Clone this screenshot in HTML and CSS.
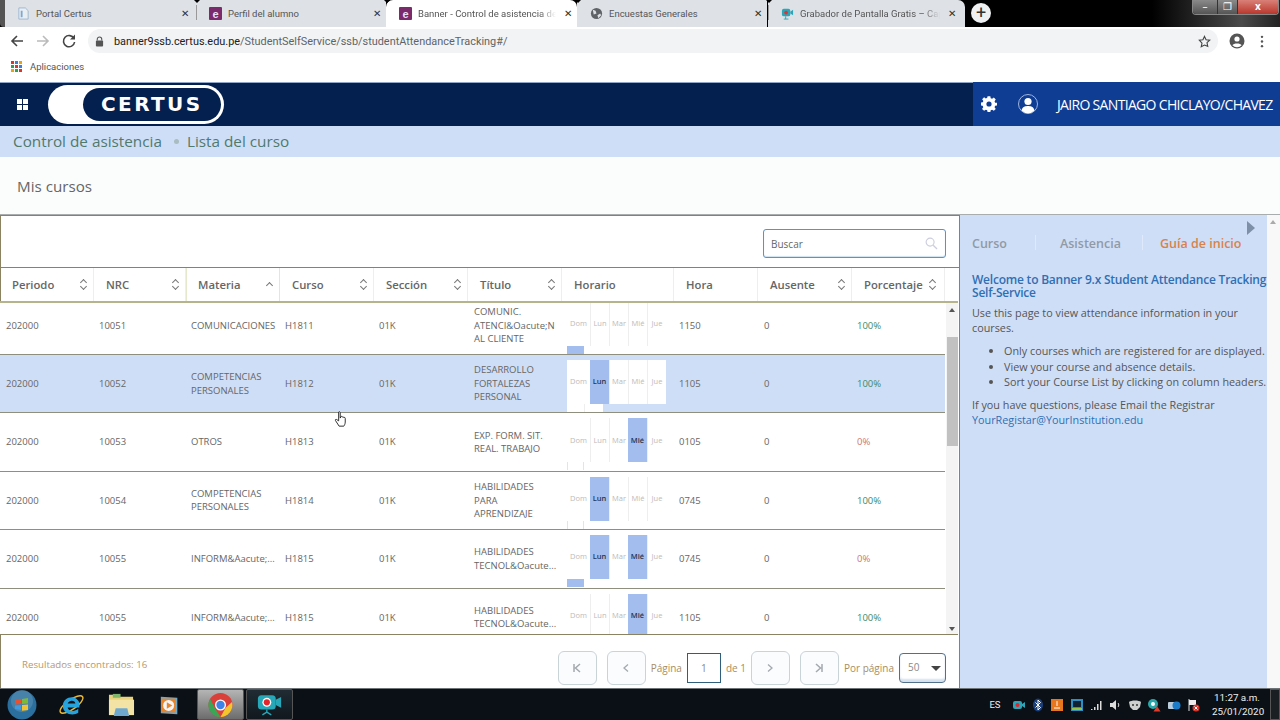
FILE: index.html
```html
<!DOCTYPE html>
<html lang="es">
<head>
<meta charset="utf-8">
<title>Banner - Control de asistencia</title>
<link rel="stylesheet" href="styles.css">
</head>
<body>
<div class="tabbar">
  <div class="tail"></div>
  <div class="tab t1">
    <svg class="fav" viewBox="0 0 14 14"><path d="M2 1h7l3 3v9H2z" fill="#e9eef3" stroke="#9db6cf"/><path d="M4 4h2v7H4z" fill="#7fa8d0"/></svg>
    <span class="tab-title">Portal Certus</span><span class="tab-x">✕</span>
  </div>
  <div class="tab sep notch">
    <svg class="fav" viewBox="0 0 14 14"><rect width="14" height="14" rx="1" fill="#7b2a6b"/><text x="7" y="11.5" text-anchor="middle" class="fav-e">e</text></svg>
    <span class="tab-title">Perfil del alumno</span><span class="tab-x">✕</span>
  </div>
  <div class="tab active notch">
    <svg class="fav" viewBox="0 0 14 14"><rect width="14" height="14" rx="1" fill="#7b2a6b"/><text x="7" y="11.5" text-anchor="middle" class="fav-e">e</text></svg>
    <span class="tab-title fade">Banner - Control de asistencia de</span><span class="tab-x">✕</span>
  </div>
  <div class="tab notch">
    <svg class="fav" viewBox="0 0 14 14"><circle cx="7" cy="7" r="6" fill="#5f6368"/><path d="M3 3l3 1 1 3-3 1zM8 9l3-2 1 2-3 3z" fill="#dee1e6"/></svg>
    <span class="tab-title">Encuestas Generales</span><span class="tab-x">✕</span>
  </div>
  <div class="tab sep notch last">
    <svg class="fav" viewBox="0 0 14 14"><rect x="1" y="2" width="9" height="8" rx="2" fill="#2aa6b8"/><circle cx="5.5" cy="6" r="2" fill="#e8312f"/><path d="M10 5l3-2v6l-3-2z" fill="#2aa6b8"/><path d="M5 10v3M3 13h5" stroke="#2aa6b8"/></svg>
    <span class="tab-title fade">Grabador de Pantalla Gratis – Cap</span><span class="tab-x">✕</span>
  </div>
  <div class="newtab">+</div>
  <div class="winctl">
    <span class="wbtn">–</span><span class="wbtn wmid">❐</span><span class="wbtn wclose">x</span>
  </div>
</div>

<div class="toolbar">
  <svg class="nav" viewBox="0 0 16 16"><path d="M14 8H3M8 3L3 8l5 5" fill="none" stroke="#444" stroke-width="1.6"/></svg>
  <svg class="nav" viewBox="0 0 16 16"><path d="M2 8h11M8 3l5 5-5 5" fill="none" stroke="#bbb" stroke-width="1.6"/></svg>
  <svg class="nav" viewBox="0 0 16 16"><path d="M13 5.5A5.6 5.6 0 1 0 13.6 9" fill="none" stroke="#444" stroke-width="1.6"/><path d="M14 1.5V6.5H9z" fill="#444"/></svg>
  <div class="omni">
    <svg class="lock" viewBox="0 0 10 12"><path d="M2.5 5V3.5a2.5 2.5 0 0 1 5 0V5" fill="none" stroke="#555" stroke-width="1.2"/><rect x="1" y="5" width="8" height="6.5" rx="1" fill="#555"/></svg>
    <span class="url"><b>banner9ssb.certus.edu.pe</b>/StudentSelfService/ssb/studentAttendanceTracking#/</span>
    <svg class="star" viewBox="0 0 14 14"><path d="M7 1.5l1.7 3.6 3.9.5-2.9 2.7.8 3.9L7 10.8l-3.5 1.9.8-3.9L1.4 5.6l3.9-.5z" fill="none" stroke="#444" stroke-width="1.2"/></svg>
  </div>
  <svg class="acct" viewBox="0 0 16 16"><circle cx="8" cy="8" r="7.5" fill="#555"/><circle cx="8" cy="6" r="2.6" fill="#fff"/><path d="M3.4 12.2c1-2.2 8.200-2.200 9.200 0A6 6 0 0 1 3.400 12.200z" fill="#fff"/></svg>
  <svg class="menu" viewBox="0 0 4 14"><circle cx="2" cy="2" r="1.300" fill="#555"/><circle cx="2" cy="7" r="1.300" fill="#555"/><circle cx="2" cy="12" r="1.300" fill="#555"/></svg>
</div>

<div class="bookmarks">
  <svg class="apps" viewBox="0 0 11 11">
    <rect width="3" height="3" fill="#d9362b"/><rect x="4" width="3" height="3" fill="#3c7de0"/><rect x="8" width="3" height="3" fill="#e8a21a"/>
    <rect y="4" width="3" height="3" fill="#2f9e4f"/><rect x="4" y="4" width="3" height="3" fill="#d9362b"/><rect x="8" y="4" width="3" height="3" fill="#3c7de0"/>
    <rect y="8" width="3" height="3" fill="#e8a21a"/><rect x="4" y="8" width="3" height="3" fill="#2f9e4f"/><rect x="8" y="8" width="3" height="3" fill="#d9362b"/>
  </svg>
  <span>Aplicaciones</span>
</div>

<header class="appbar">
  <svg class="grid-ic" viewBox="0 0 11 11"><path d="M0 0h5v5H0zM6 0h5v5H6zM0 6h5v5H0zM6 6h5v5H6z" fill="#fff"/></svg>
  <div class="logo"><div class="logo-in">CERTUS</div></div>
  <div class="userbox">
    <svg class="gear" viewBox="0 0 16 16"><path d="M6.500 0h3l.4 2.200 1.500.6L13.300 1.500l2.100 2.100-1.300 1.900.6 1.500L16.800 7v3l-2.100.4-.6 1.500 1.300 1.900-2.100 2.100-1.900-1.300-1.500.6-.4 2.200h-3l-.4-2.200-1.500-.6-1.900 1.300L.5 13.800l1.300-1.900-.6-1.500L-.8 10V7l2.100-.4.6-1.500L.6 3.200 2.700 1.100l1.900 1.300 1.500-.6z" fill="#fff" transform="translate(.6 .2) scale(.92)"/><circle cx="8" cy="8" r="2.600" fill="#0f3d94"/></svg>
    <svg class="user" viewBox="0 0 20 20"><circle cx="10" cy="10" r="9.500" fill="none" stroke="#9fb6de"/><circle cx="10" cy="7.500" r="3.600" fill="#fff"/><path d="M3.500 16.500c1-4 4-4.500 6.500-4.500s5.500.5 6.500 4.500A9 9 0 0 1 3.500 16.500z" fill="#fff"/></svg>
    <span class="uname">JAIRO SANTIAGO CHICLAYO/CHAVEZ</span>
  </div>
</header>

<nav class="crumbs">
  <span>Control de asistencia</span><i class="dot"></i><span>Lista del curso</span>
</nav>
<div class="pagetitle">Mis cursos</div>

<main class="main">
  <section class="panel">
    <div class="searchrow">
      <div class="search"><span>Buscar</span>
        <svg viewBox="0 0 14 14"><circle cx="5.500" cy="5.500" r="4.300" fill="none" stroke="#ccd" stroke-width="1.200"/><path d="M8.800 8.800L13 13" stroke="#ccd" stroke-width="1.400"/></svg>
      </div>
    </div>
    <div class="thead">
      <div class="th">Periodo<i class="sort"></i></div>
      <div class="th">NRC<i class="sort"></i></div>
      <div class="th th-on">Materia<i class="sort up"></i></div>
      <div class="th">Curso<i class="sort"></i></div>
      <div class="th">Sección<i class="sort"></i></div>
      <div class="th">Título<i class="sort"></i></div>
      <div class="th">Horario</div>
      <div class="th">Hora</div>
      <div class="th">Ausente<i class="sort"></i></div>
      <div class="th">Porcentaje<i class="sort"></i></div>
    </div>
    <div class="tbody">
      <div class="rows">
        <div class="row">
          <div class="td t1c">202000</div><div class="td">10051</div><div class="td">COMUNICACIONES</div><div class="td">H1811</div><div class="td">01K</div>
          <div class="td t6">COMUNIC.<br>ATENCI&amp;Oacute;N<br>AL CLIENTE</div>
          <div class="sched"><div class="days"><span class="d0">Dom</span><span>Lun</span><span>Mar</span><span>Mié</span><span>Jue</span></div><div class="strip"><i class="s-blue"></i></div></div>
          <div class="td">1150</div><div class="td t9">0</div><div class="td ok">100%</div>
        </div>
        <div class="row sel">
          <div class="td t1c">202000</div><div class="td">10052</div><div class="td">COMPETENCIAS<br>PERSONALES</div><div class="td">H1812</div><div class="td">01K</div>
          <div class="td t6">DESARROLLO<br>FORTALEZAS<br>PERSONAL</div>
          <div class="sched"><div class="days white"><span class="d0">Dom</span><span class="on">Lun</span><span>Mar</span><span>Mié</span><span>Jue</span></div><div class="strip"><i class="s-white"></i><i class="s-white2"></i></div></div>
          <div class="td">1105</div><div class="td t9">0</div><div class="td ok">100%</div>
        </div>
        <div class="row">
          <div class="td t1c">202000</div><div class="td">10053</div><div class="td">OTROS</div><div class="td">H1813</div><div class="td">01K</div>
          <div class="td t6">EXP. FORM. SIT.<br>REAL. TRABAJO</div>
          <div class="sched"><div class="days"><span class="d0">Dom</span><span>Lun</span><span>Mar</span><span class="on">Mié</span><span>Jue</span></div><div class="strip"><i class="s-tick"></i></div></div>
          <div class="td">0105</div><div class="td t9">0</div><div class="td bad">0%</div>
        </div>
        <div class="row">
          <div class="td t1c">202000</div><div class="td">10054</div><div class="td">COMPETENCIAS<br>PERSONALES</div><div class="td">H1814</div><div class="td">01K</div>
          <div class="td t6">HABILIDADES<br>PARA<br>APRENDIZAJE</div>
          <div class="sched"><div class="days"><span class="d0">Dom</span><span class="on">Lun</span><span>Mar</span><span>Mié</span><span>Jue</span></div><div class="strip"><i class="s-tick"></i></div></div>
          <div class="td">0745</div><div class="td t9">0</div><div class="td ok">100%</div>
        </div>
        <div class="row">
          <div class="td t1c">202000</div><div class="td">10055</div><div class="td">INFORM&amp;Aacute;...</div><div class="td">H1815</div><div class="td">01K</div>
          <div class="td t6">HABILIDADES<br>TECNOL&amp;Oacute...</div>
          <div class="sched"><div class="days"><span class="d0">Dom</span><span class="on">Lun</span><span>Mar</span><span class="on">Mié</span><span>Jue</span></div><div class="strip"><i class="s-blue"></i></div></div>
          <div class="td">0745</div><div class="td t9">0</div><div class="td bad">0%</div>
        </div>
        <div class="row">
          <div class="td t1c">202000</div><div class="td">10055</div><div class="td">INFORM&amp;Aacute;...</div><div class="td">H1815</div><div class="td">01K</div>
          <div class="td t6">HABILIDADES<br>TECNOL&amp;Oacute...</div>
          <div class="sched"><div class="days"><span class="d0">Dom</span><span>Lun</span><span>Mar</span><span class="on">Mié</span><span>Jue</span></div></div>
          <div class="td">1105</div><div class="td t9">0</div><div class="td ok">100%</div>
        </div>
      </div>
      <div class="vscroll">
        <i class="arr-up"></i>
        <div class="thumb"></div>
        <i class="arr-down"></i>
      </div>
    </div>
    <footer class="tfoot">
      <span class="found">Resultados encontrados: 16</span>
      <div class="pager">
        <button class="pbtn">
          <svg viewBox="0 0 10 10"><path d="M2 1v8M8 1L3.500 5 8 9" fill="none" stroke="#a3a9ae" stroke-width="1.500"/></svg>
        </button>
        <button class="pbtn">
          <svg viewBox="0 0 10 10"><path d="M7 1.500L3 5l4 3.500" fill="none" stroke="#a3a9ae" stroke-width="1.300"/></svg>
        </button>
        <span class="plabel">Página</span>
        <div class="pinput">1</div>
        <span class="plabel">de 1</span>
        <button class="pbtn">
          <svg viewBox="0 0 10 10"><path d="M3 1.500L7 5 3 8.500" fill="none" stroke="#a3a9ae" stroke-width="1.300"/></svg>
        </button>
        <button class="pbtn">
          <svg viewBox="0 0 10 10"><path d="M8 1v8M2 1l4.500 4L2 9" fill="none" stroke="#a3a9ae" stroke-width="1.500"/></svg>
        </button>
        <span class="plabel">Por página</span>
        <div class="pselect">50<i></i></div>
      </div>
    </footer>
  </section>

  <aside class="side">
    <div class="stabs">
      <span class="stab s1">Curso</span><span class="stab s2">Asistencia</span><span class="stab s3">Guía de inicio</span><i class="collapse"></i>
    </div>
    <h2>Welcome to Banner 9.x Student Attendance Tracking<br>Self-Service</h2>
    <p>Use this page to view attendance information in your courses.</p>
    <ul>
      <li>Only courses which are registered for are displayed.</li>
      <li>View your course and absence details.</li>
      <li>Sort your Course List by clicking on column headers.</li>
    </ul>
    <p>If you have questions, please Email the Registrar<br><a>YourRegistar@YourInstitution.edu</a></p>
  </aside>
  <div class="pagescroll"><i class="arr-up"></i></div>
</main>

<div class="taskbar">
  <svg class="orb" viewBox="0 0 30 30"><circle cx="15" cy="15" r="14.500" fill="#2a6f9e"/><circle cx="15" cy="11" r="11" fill="#5b8fb3" opacity=".6"/><path d="M8 10l6-1v5l-6 .6z" fill="#e8502f"/><path d="M15 9l6-1v5.500l-6 .5z" fill="#7cb83a"/><path d="M8 15.500l6-.5v5l-6-1z" fill="#3f9ae0"/><path d="M15 15l6-.5V20l-6 .8z" fill="#f2c230"/></svg>
  <svg class="tb-ic ie" viewBox="0 0 28 28"><ellipse cx="14" cy="14" rx="14" ry="5" transform="rotate(-35 14 14)" fill="none" stroke="#e9b93a" stroke-width="1.500"/><path d="M22 17H10c.5 4 7 5 11 1.500v4c-6 4-16 1-16-7 0-8 9-11 14-7.500 3 2 4 5 3 9zm-12-4h8c0-4-7-4-8 0z" fill="#26a3dd"/></svg>
  <svg class="tb-ic folder" viewBox="0 0 28 28"><path d="M1 4h9l2 2h14v19H1z" fill="#e8d27c"/><path d="M1 9h26v16H1z" fill="#f3e4a6"/><path d="M5 3h8v4H5z" fill="#7fb56a"/><path d="M6 26l2-8h12l2 8z" fill="#6ea8cf"/></svg>
  <svg class="tb-ic wmp" viewBox="0 0 24 24"><path d="M2 3l18 1v18L2 21z" fill="#6fa8c8"/><path d="M3 5h15v15H3z" fill="#e8842a"/><circle cx="10.500" cy="12.500" r="6" fill="#f5f5f5"/><path d="M8.500 9l6 3.500-6 3.500z" fill="#e8842a"/></svg>
  <div class="tb-slot on">
    <svg viewBox="0 0 24 24"><circle cx="12" cy="12" r="12" fill="#d9403a"/><path d="M12 24A12 12 0 0 1 1.600 6l5 9.500z" fill="#3aa655"/><path d="M12 24l5-9 6.500-6A12 12 0 0 1 12 24z" fill="#f5c52e"/><circle cx="12" cy="12" r="5.500" fill="#fff"/><circle cx="12" cy="12" r="4.200" fill="#3f82e8"/></svg>
  </div>
  <div class="tb-slot">
    <svg viewBox="0 0 28 24"><rect x="1" y="1" width="20" height="16" rx="4" fill="#27a7b8"/><circle cx="11" cy="9" r="5" fill="#fff"/><circle cx="11" cy="9" r="3.500" fill="#e3262b"/><path d="M21 6l6-3v12l-6-3z" fill="#27a7b8"/><path d="M11 17v4M6 23l5-3 5 3" fill="none" stroke="#27a7b8" stroke-width="1.500"/></svg>
  </div>
  <div class="tray">
    <span class="lang">ES</span>
    <svg class="tr" viewBox="0 0 14 14"><rect x="1" y="3" width="9" height="8" rx="2" fill="#2aa6b8"/><circle cx="5.500" cy="7" r="2" fill="#e3262b"/><path d="M10 6l3-2v6l-3-2z" fill="#2aa6b8"/></svg>
    <svg class="tr" viewBox="0 0 14 14"><ellipse cx="7" cy="7" rx="5" ry="6.500" fill="#1b3f7a"/><path d="M4.500 4.500l5 5L7 12V2l2.500 2.500-5 5" fill="none" stroke="#fff"/></svg>
    <svg class="tr" viewBox="0 0 14 14"><rect x="1" y="1" width="12" height="12" fill="#e8761f"/><path d="M4 10h6M7 3v5" stroke="#fff"/></svg>
    <svg class="tr" viewBox="0 0 14 14"><rect x="1" y="1" width="12" height="12" fill="#2d8fc2"/><rect x="3" y="3" width="8" height="6" fill="#123"/><rect x="2" y="10" width="10" height="2" fill="#9ac23c"/></svg>
    <svg class="tr" viewBox="0 0 14 14"><path d="M2 11h1.500v1H2zM5 9h1.500v3H5zM8 6h1.500v6H8zM11 3h1.500v9H11z" fill="#ddd"/></svg>
    <svg class="tr" viewBox="0 0 14 14"><path d="M2 5h2.500L8 2v10L4.500 9H2z" fill="#ddd"/><path d="M10 5c1 1 1 3 0 4" fill="none" stroke="#ddd"/></svg>
    <svg class="tr" viewBox="0 0 14 14"><path d="M1 4c2-2 10-2 12 0l-1 5-3 3H5L2 9z" fill="#cfcfcf"/><circle cx="5" cy="7" r="1" fill="#333"/><circle cx="9" cy="7" r="1" fill="#333"/></svg>
    <svg class="tr" viewBox="0 0 14 14"><circle cx="6" cy="6" r="5" fill="#2ba6a8"/><circle cx="6" cy="6" r="2" fill="#fff"/><path d="M10 8l3.500 5.500h-7z" fill="#e03a2a"/></svg>
    <svg class="tr" viewBox="0 0 14 14"><rect x="1" y="4" width="9" height="7" rx="1" fill="#bcd"/><circle cx="9.500" cy="7.500" r="4" fill="#1d7cc9"/></svg>
    <svg class="tr" viewBox="0 0 14 14"><path d="M3 1v12" stroke="#ddd"/><path d="M3 2h7v5H3z" fill="#eee"/><circle cx="10" cy="10" r="3.500" fill="#d9362b"/><path d="M8.500 8.500l3 3m0-3l-3 3" stroke="#fff"/></svg>
    <div class="clock">11:27 a.m.<br>25/01/2020</div>
    <div class="showdesk"></div>
  </div>
</div>

<svg class="cursor" viewBox="0 0 14 18"><path d="M5 1.500c.8-.7 1.700-.3 1.700.7V8l.8-1.500c.5-.5 1.300-.2 1.300.4l.7-.2c.6-.1 1 .2 1 .7l.7-.1c.6 0 .9.400.9 1v4c0 2-1 3.700-1.500 4.400H5.500L1.500 10.500c-.4-.7.5-1.500 1.200-1L5 11z" fill="#fff" stroke="#222"/></svg>
</body>
</html>
```
FILE: styles.css
```css
* { box-sizing: border-box; }
html, body { margin: 0; height: 100%; }
body {
  width: 1280px; height: 720px; overflow: hidden; position: relative;
  display: flex; flex-direction: column;
  font-family: "Open Sans", "Liberation Sans", sans-serif; color: #555; background: #fff;
}

/* browser tabs */
.tabbar { height: 27px; background: linear-gradient(90deg, #000 90%, #4a4a4a 97%, #222 100%); display: flex; align-items: stretch; flex: none; position: relative; }
.tail { width: 5px; background: #555; border-radius: 0 0 0 4px; }
.tab {
  width: 190px; background: #dee1e6; display: flex; align-items: center; gap: 6px;
  padding: 0 3px 0 13px; font: 9.5px "Roboto", sans-serif; color: #555; position: relative;
}
.tab.t1 { width: 191px; padding: 0 5px 0 12px; }
.tab.active { background: #fff; border-radius: 7px 7px 0 0; width: 191px; }
.tab.sep::before { content: ""; position: absolute; left: 0; top: 5px; bottom: 7px; width: 1px; background: #999; }
.tab.notch::after { content: ""; position: absolute; left: -2px; top: 0; width: 0; height: 0; border: 3px solid transparent; border-top: 3px solid #000; border-bottom: 0; }
.tab.last { border-radius: 0 7px 0 0; width: 197px; padding-right: 7px; margin-left: 1px; }
.fav { width: 13px; height: 13px; flex: none; }
.fav-e { font: bold 12px "Liberation Sans", sans-serif; fill: #e9dff0; }
.tab-title { flex: 1; overflow: hidden; white-space: nowrap; }
.tab-title.fade { -webkit-mask-image: linear-gradient(90deg, #000 88%, transparent 100%); mask-image: linear-gradient(90deg, #000 88%, transparent 100%); }
.tab-x { font-size: 10px; color: #333; width: 12px; text-align: center; flex: none; }
.newtab {
  width: 20px; height: 20px; border-radius: 50%; background: #eef0f2; color: #333; margin: 3px 0 0 6px;
  font: 18px/19px "Roboto", sans-serif; text-align: center;
}
.winctl { margin-left: auto; margin-right: 1px; display: flex; height: 15px; border: 1px solid #888; border-top: 0; border-radius: 0 0 4px 4px; overflow: hidden; }
.wbtn { width: 25px; background: linear-gradient(#8a8a8a, #555); color: #fff; font-size: 10px; line-height: 12px; text-align: center; border-right: 1px solid #333; }
.wmid { width: 20px; }
.wclose { width: 40px; background: linear-gradient(#d98078, #b9372c); border: 0; font-weight: bold; }

/* browser toolbar */
.toolbar { height: 28px; background: #fff; display: flex; align-items: center; padding: 0 0 0 9px; flex: none; }
.nav { width: 16px; height: 16px; margin-right: 10px; flex: none; }
.omni {
  width: 1130px; height: 24px; margin-left: 1px; border-radius: 12px; background: #f1f3f4;
  display: flex; align-items: center; padding: 0 6px 0 8px; flex: none;
}
.lock { width: 9px; height: 11px; margin-right: 10px; margin-left: -1px; }
.url { font: 10.9px "Roboto", sans-serif; color: #5f6368; flex: 1; }
.url b { font-weight: 400; color: #202124; }
.star { width: 13px; height: 13px; margin-right: 1px; }
.acct { width: 16px; height: 16px; margin-left: 11px; flex: none; }
.menu { width: 4px; height: 13px; margin-left: 15px; flex: none; }

.bookmarks { height: 27px; background: #fff; display: flex; align-items: center; gap: 8px; padding: 0 0 4px 11px; font: 9.5px "Roboto", sans-serif; color: #555; flex: none; }
.apps { width: 11px; height: 11px; }

/* app header */
.appbar { height: 44px; background: #03204f; display: flex; align-items: center; flex: none; box-shadow: inset 0 1px 0 #8fa6c8; }
.grid-ic { width: 11px; height: 11px; margin-left: 17px; }
.logo {
  width: 176px; height: 39px; margin-left: 20px; background: #fff; border-radius: 20px;
  display: flex; justify-content: flex-end; align-items: center; padding-right: 3px;
}
.logo-in {
  width: 138px; height: 33px; background: #03204f; border-radius: 17px; color: #fff;
  font: bold 20px/33px "DejaVu Sans", sans-serif; letter-spacing: 2.4px; padding-left: 18px;
}
.userbox { margin-left: auto; width: 307px; height: 100%; background: #0f3d94; display: flex; align-items: center; padding-left: 8px; }
.gear { width: 16px; height: 16px; }
.user { width: 20px; height: 20px; margin-left: 21px; }
.uname { color: #fff; font-size: 14px; margin-left: 19px; white-space: nowrap; letter-spacing: -.68px; }

/* breadcrumb and title */
.crumbs { height: 31px; background: #cfdef7; display: flex; align-items: center; padding: 0 0 2px 13px; font-size: 15.3px; color: #4f7a6c; flex: none; }
.dot { width: 5px; height: 5px; border-radius: 50%; background: #a9bcc0; margin: 2px 8px 0 12px; }
.pagetitle { height: 58px; background: #fbfdfd; border-bottom: 1px solid #a9adad; display: flex; align-items: center; padding-left: 17px; font-size: 15.2px; color: #666; flex: none; }

/* main */
.main { height: 473px; display: flex; flex: none; }
.panel { width: 960px; border: 1px solid #8a8260; border-width: 1px 1px 0 1px; display: flex; flex-direction: column; background: #fff; }
.searchrow { height: 52px; display: flex; justify-content: flex-end; align-items: flex-start; padding: 13px 13px 0 0; flex: none; border-bottom: 1px solid #8a8260; }
.search { width: 183px; height: 29px; border: 1px solid #5f93bd; border-radius: 3px; display: flex; align-items: center; justify-content: space-between; padding: 0 7px; font-size: 10px; color: #666; box-shadow: inset 0 -1px 1px #cfe0ee; }
.search svg { width: 13px; height: 13px; }

.thead { margin-left: -1px; display: grid; grid-template-columns: 94px 92px 94px 94px 94px 94px 112px 84px 94px 93px; height: 35px; flex: none; border-bottom: 2px solid #b6b48c; width: 958px; }
.th { display: flex; align-items: center; justify-content: space-between; padding: 0 7px 0 12px; font-size: 11.3px; font-weight: 600; color: #666; border-right: 1px solid #eee; }
.th:last-child { padding-right: 9px; }
.th-on { border-left: 1px solid #e6e8cc; border-right: 1px solid #e6e8cc; padding-left: 11px; }
.sort { width: 7px; height: 11px; position: relative; display: block; flex: none; }
.sort::before, .sort::after { content: ""; position: absolute; left: 1.5px; width: 4px; height: 4px; border: solid #777; border-width: 1px 0 0 1px; transform: rotate(45deg); }
.sort::before { top: 1px; }
.sort::after { bottom: 1px; transform: rotate(225deg); }
.sort.up::after { display: none; }
.sort.up::before { top: 4px; }

.tbody { height: 332px; overflow: hidden; display: flex; margin-left: -1px; flex: none; border-bottom: 1px solid #8a8260; position: relative; width: 958px; }
.rows { width: 945px; flex: none; margin-top: -6.4px; }
.row { display: grid; grid-template-columns: 94px 92px 94px 94px 94px 94px 112px 84px 94px 93px; height: 58.4px; border-bottom: 1px solid #8f8f80; font-size: 9.5px; line-height: 13.5px; color: #666; background: #fff; }
.row.sel { background: #cfdef7; }
.td { padding-left: 5px; display: flex; align-items: center; white-space: nowrap; }
.td.t1c, .td.t6, .td.t9 { padding-left: 6px; }
.ok { color: #3d8a68; }
.bad { color: #d0766a; }

.sched { padding: 5px 0 0 5px; display: flex; flex-direction: column; }
.days { display: flex; height: 44px; flex: none; width: 99px; }
.days span { width: 19px; display: flex; align-items: center; justify-content: center; font-size: 7.5px; color: #bbb; border-left: 1px solid #eee; }
.days .d0 { width: 23px; border-left: 0; }
.days.white { background: #fff; }
.days .on { background: #a3bdee; color: #2a3550; font-weight: 600; border-left: 0; }
.strip { display: flex; height: 8px; position: relative; }
.s-blue { width: 17px; height: 8px; background: #a3bdee; display: block; }
.s-white { width: 17px; height: 8px; background: #fff; display: block; }
.s-white2 { width: 19px; height: 8px; background: #fff; border-left: 1px solid #eee; display: block; }
.s-tick { width: 17px; height: 8px; border: solid #e4e4e4; border-width: 0 1px; display: block; }

.vscroll { width: 12px; background: #f4f4f4; position: relative; flex: none; margin-left: 1px; }
.thumb { position: absolute; top: 34px; left: 1px; right: 0; height: 109px; background: #c1c1c1; }
.arr-up, .arr-down { position: absolute; left: 3px; width: 0; height: 0; border: 3px solid transparent; }
.arr-up { top: 2px; border-bottom: 4px solid #555; }
.arr-down { bottom: 0; border-top: 4px solid #555; }

.tfoot { flex: 1; display: flex; align-items: center; justify-content: space-between; padding: 0 13px 0 21px; }
.found { font-size: 9.7px; color: #b9976b; margin-top: 6px; }
.pager { display: flex; align-items: center; margin-top: 12px; }
.pbtn { width: 39px; height: 34px; border: 1px solid #c9d3d8; border-radius: 6px; background: #fbfcfd; margin-right: 10px; padding: 0; display: flex; align-items: center; justify-content: center; }
.pbtn svg { width: 10px; height: 10px; }
.plabel { font-size: 10px; color: #a98d5e; margin: 0 5px 0 -5px; white-space: nowrap; }
.pinput { width: 34px; height: 30px; border: 1px solid #2e5f7d; text-align: center; font-size: 10px; line-height: 28px; color: #888; margin-right: 10px; }
.pselect { width: 47px; height: 30px; border: 1px solid #50708c; border-radius: 4px; font-size: 10px; color: #888; padding-left: 8px; line-height: 26px; position: relative; box-shadow: inset 0 -3px 2px #d5e2ee; }
.pselect i { position: absolute; right: 4px; top: 12px; width: 0; height: 0; border: 5px solid transparent; border-top: 5px solid #444; border-bottom: 0; }

/* side panel */
.side { width: 307px; background: #cfdef7; padding: 0 0 0 12px; font-size: 10.8px; line-height: 15px; color: #555; position: relative; }
.stabs { display: flex; height: 51px; align-items: flex-end; padding-bottom: 14px; font-size: 12.5px; font-weight: 600; line-height: 16px; position: relative; }
.stab { color: #8f9aa6; }
.s1 { width: 88px; }
.s2 { width: 100px; }
.s3 { color: #d8824a; }
.s1::after, .s2::after { content: ""; position: absolute; top: 20px; height: 15px; width: 1px; background: #dfe9fb; }
.s1::after { left: 63px; }
.s2::after { left: 170px; }
.collapse { position: absolute; left: 275px; top: 6px; width: 0; height: 0; border: 7px solid transparent; border-left: 8px solid #7e8fa8; border-right: 0; }
.side h2 { margin: 7px 0 6px; font-size: 12px; line-height: 13px; font-weight: 600; color: #2f6fb3; white-space: nowrap; letter-spacing: -.22px; }
.side p { margin: 0 0 8px; width: 280px; }
.side ul { margin: 0 0 7px; padding: 0 0 0 32px; white-space: nowrap; line-height: 15.5px; }
.side a { color: #2f6fb3; }
.pagescroll { width: 13px; background: #f8f8f8; position: relative; flex: none; }
.pagescroll .arr-up { border-bottom-color: #aaa; }

/* windows taskbar */
.taskbar { height: 32px; background: #0b1016; border-top: 1px solid #6e7378; display: flex; align-items: center; flex: none; color: #eee; }
.orb { width: 30px; height: 30px; margin-left: 7px; }
.tb-ic { width: 27px; height: 27px; flex: none; }
.ie { margin-left: 21px; }
.folder { margin-left: 23px; }
.wmp { margin-left: 24px; width: 22px; height: 22px; }
.tb-slot { width: 47px; height: 31px; border-radius: 2px; background: linear-gradient(#202b33, #11181e); border: 1px solid #555; display: flex; align-items: center; justify-content: center; margin-left: 2px; }
.tb-slot.on { background: linear-gradient(#b5b5b5, #6c6c6c); margin-left: 16px; }
.tb-slot svg { width: 25px; height: 24px; }
.tray { margin-left: auto; display: flex; align-items: center; height: 100%; font-size: 9.5px; }
.lang { margin-right: 11px; font-family: "Roboto", sans-serif; }
.tr { width: 14px; height: 14px; margin-right: 5.4px; flex: none; }
.clock { margin-left: 6.6px; font: 9.8px/14px "Roboto", sans-serif; text-align: center; width: 50px; }
.showdesk { width: 10px; height: 31px; margin-left: 8px; border: 1px solid #555; background: #1a1f24; }

.cursor { position: absolute; left: 334px; top: 410px; width: 13px; height: 18px; }
```
